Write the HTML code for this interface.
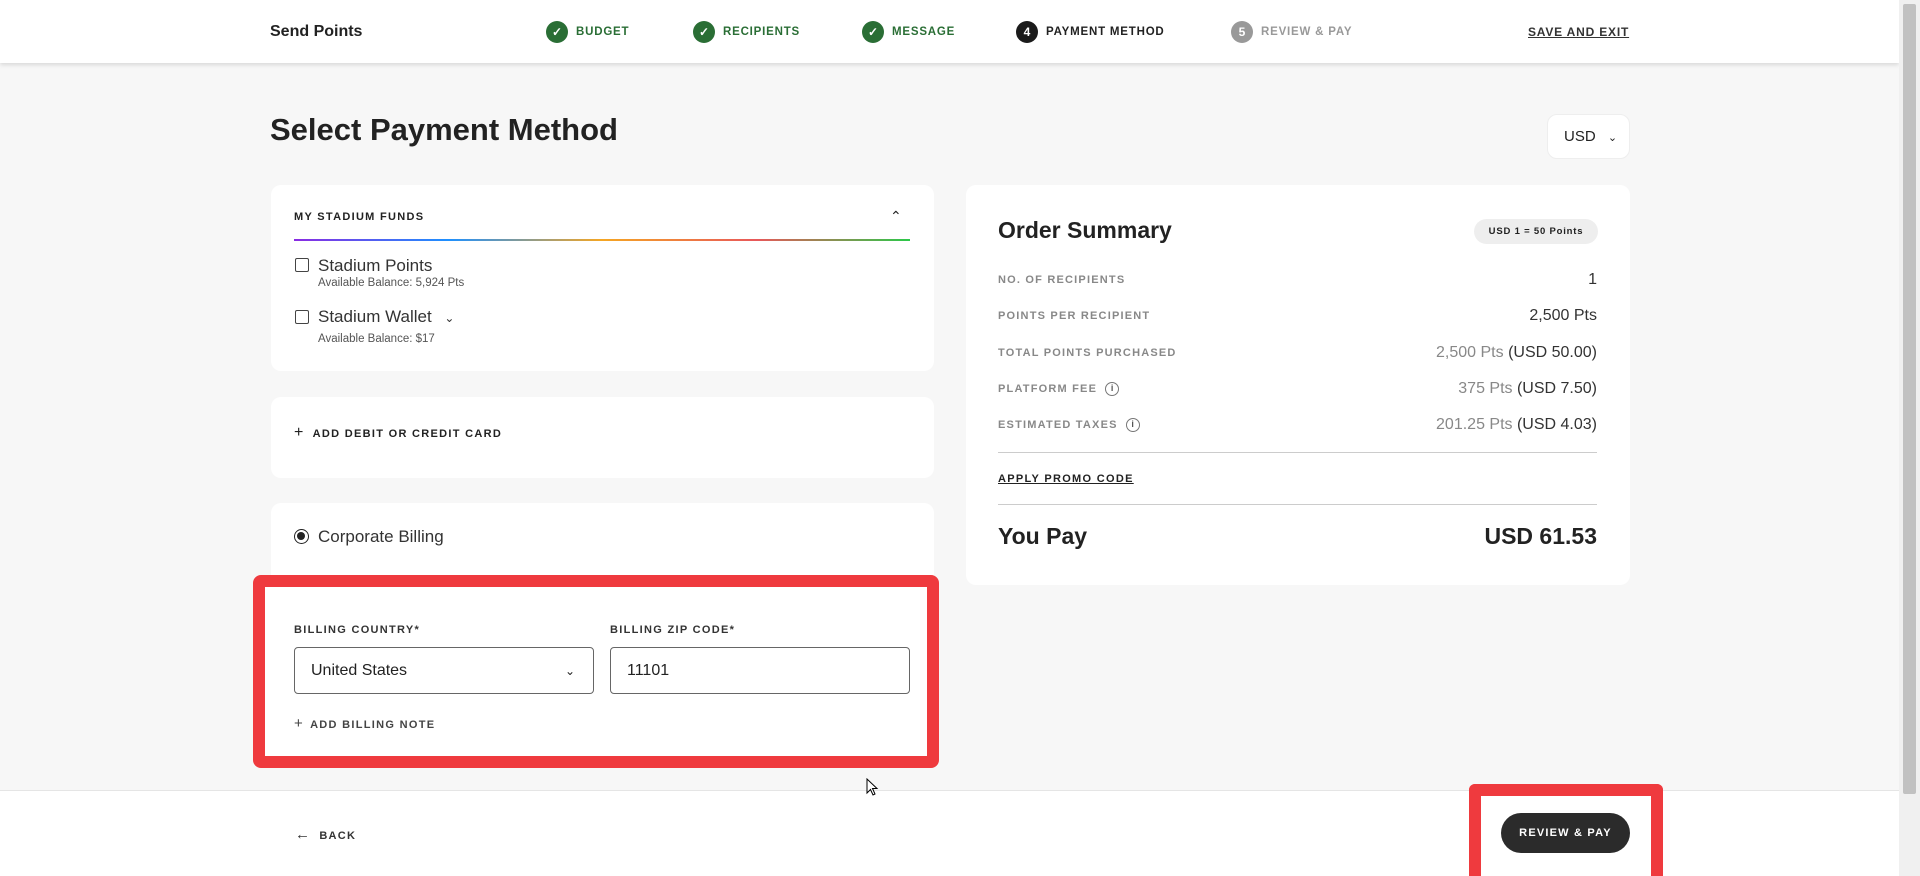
<!DOCTYPE html>
<html><head><style>
*{box-sizing:border-box;margin:0;padding:0}
body{width:1920px;height:876px;background:#f7f7f7;font-family:"Liberation Sans",sans-serif;color:#222;position:relative;overflow:hidden}
.abs{position:absolute}
.hdr{left:0;top:0;width:1899px;height:63px;background:#fff;box-shadow:0 2px 4px rgba(0,0,0,.12)}
.step{top:21px;height:22px;display:flex;align-items:center;font-size:11.5px;font-weight:bold;letter-spacing:.8px}
.circ{width:22px;height:22px;border-radius:50%;display:flex;align-items:center;justify-content:center;color:#fff;font-size:12px;margin-right:8px;letter-spacing:0}
.card{background:#fff;border-radius:10px}
.cap{font-size:11px;font-weight:bold;letter-spacing:1.3px}
.row{left:998px;width:599px;display:flex;justify-content:space-between;align-items:center;font-size:11px;font-weight:bold;letter-spacing:1.2px;color:#888}
.row b{font-size:16px;letter-spacing:0;color:#333;font-weight:normal}
.row b span{color:#888}
.info{display:inline-block;width:14px;height:14px;border:1.5px solid #777;border-radius:50%;font-size:9px;text-align:center;line-height:11px;color:#555;margin-left:8px;vertical-align:middle;letter-spacing:0}
.cb{width:14px;height:14px;border:1.5px solid #444;border-radius:2px}
.inp{height:47px;border:1px solid #666;border-radius:4px;background:#fff;font-size:16px;padding-left:16px;display:flex;align-items:center}
</style></head><body>
<div class="abs hdr"></div>
<div class="abs" style="left:270px;top:23px;font-size:16px;font-weight:bold">Send Points</div>
<div class="abs step" style="left:546px;color:#2a6e35"><div class="circ" style="background:#2a6e35">✓</div>BUDGET</div>
<div class="abs step" style="left:693px;color:#2a6e35"><div class="circ" style="background:#2a6e35">✓</div>RECIPIENTS</div>
<div class="abs step" style="left:862px;color:#2a6e35"><div class="circ" style="background:#2a6e35">✓</div>MESSAGE</div>
<div class="abs step" style="left:1016px;color:#222"><div class="circ" style="background:#1b1b1b">4</div>PAYMENT METHOD</div>
<div class="abs step" style="left:1231px;color:#999"><div class="circ" style="background:#999">5</div>REVIEW &amp; PAY</div>
<div class="abs" style="left:1528px;top:25px;font-size:12px;font-weight:bold;letter-spacing:.8px;text-decoration:underline;color:#333">SAVE AND EXIT</div>
<div class="abs" style="left:1899px;top:0;width:21px;height:876px;background:#f0f0f0"></div>
<div class="abs" style="left:1903px;top:4px;width:13px;height:790px;background:#c1c1c1;border-radius:2px"></div>

<div class="abs" style="left:270px;top:112px;font-size:31px;font-weight:bold;color:#222">Select Payment Method</div>
<div class="abs card" style="left:1547px;top:114px;width:83px;height:45px;border:1px solid #eee;font-size:15px;padding:13px 0 0 16px">USD <span style="font-size:11px;margin-left:8px">⌄</span></div>

<div class="abs card" style="left:271px;top:185px;width:663px;height:186px"></div>
<div class="abs cap" style="left:294px;top:211px">MY STADIUM FUNDS</div>
<div class="abs" style="left:890px;top:208px;font-size:14px">⌃</div>
<div class="abs" style="left:294px;top:239px;width:616px;height:2px;background:linear-gradient(90deg,#8a2be2,#1e90ff,#f5a623,#e8585a,#2cc84a)"></div>
<div class="abs cb" style="left:295px;top:258px"></div>
<div class="abs" style="left:318px;top:256px;font-size:17px;color:#333">Stadium Points</div>
<div class="abs" style="left:318px;top:277px;font-size:11.5px;color:#555">Available Balance: 5,924 Pts</div>
<div class="abs cb" style="left:295px;top:310px"></div>
<div class="abs" style="left:318px;top:307px;font-size:17px;color:#333">Stadium Wallet <span style="font-size:12px;margin-left:8px">⌄</span></div>
<div class="abs" style="left:318px;top:333px;font-size:11.5px;color:#555">Available Balance: $17</div>

<div class="abs card" style="left:271px;top:397px;width:663px;height:81px"></div>
<div class="abs cap" style="left:294px;top:424px;color:#222"><span style="font-size:16px;font-weight:normal;margin-right:8px">+</span>ADD DEBIT OR CREDIT CARD</div>

<div class="abs card" style="left:271px;top:503px;width:663px;height:90px"></div>
<div class="abs" style="left:294px;top:529px;width:15px;height:15px;border:1.5px solid #222;border-radius:50%"><div style="width:8px;height:8px;margin:2px;background:#222;border-radius:50%"></div></div>
<div class="abs" style="left:318px;top:527px;font-size:17px;color:#333">Corporate Billing</div>

<div class="abs" style="left:253px;top:575px;width:686px;height:193px;border:12px solid #ef3a3e;border-radius:8px;background:#fff"></div>
<div class="abs cap" style="left:294px;top:624px;color:#333">BILLING COUNTRY*</div>
<div class="abs cap" style="left:610px;top:624px;color:#333">BILLING ZIP CODE*</div>
<div class="abs inp" style="left:294px;top:647px;width:300px">United States<span style="position:absolute;right:18px;font-size:12px">⌄</span></div>
<div class="abs inp" style="left:610px;top:647px;width:300px">11101</div>
<div class="abs cap" style="left:294px;top:715px;color:#444"><span style="font-size:15px;font-weight:normal;margin-right:6px">+</span>ADD BILLING NOTE</div>

<div class="abs card" style="left:966px;top:185px;width:664px;height:400px"></div>
<div class="abs" style="left:998px;top:217px;font-size:23px;font-weight:bold">Order Summary</div>
<div class="abs" style="left:1474px;top:219px;width:124px;height:25px;border-radius:13px;background:#eee;font-size:9.5px;font-weight:bold;letter-spacing:.8px;text-align:center;line-height:25px">USD 1 = 50 Points</div>
<div class="abs row" style="top:271px">NO. OF RECIPIENTS<b>1</b></div>
<div class="abs row" style="top:307px">POINTS PER RECIPIENT<b>2,500 Pts</b></div>
<div class="abs row" style="top:344px">TOTAL POINTS PURCHASED<b><span>2,500 Pts</span> (USD 50.00)</b></div>
<div class="abs row" style="top:380px"><div>PLATFORM FEE<span class="info">i</span></div><b><span>375 Pts</span> (USD 7.50)</b></div>
<div class="abs row" style="top:416px"><div>ESTIMATED TAXES<span class="info">i</span></div><b><span>201.25 Pts</span> (USD 4.03)</b></div>
<div class="abs" style="left:998px;top:452px;width:599px;height:1px;background:#ccc"></div>
<div class="abs cap" style="left:998px;top:473px;text-decoration:underline;color:#222">APPLY PROMO CODE</div>
<div class="abs" style="left:998px;top:504px;width:599px;height:1px;background:#ccc"></div>
<div class="abs" style="left:998px;top:523px;font-size:23px;font-weight:bold">You Pay</div>
<div class="abs" style="left:1400px;width:197px;text-align:right;top:523px;font-size:23px;font-weight:bold">USD 61.53</div>

<div class="abs" style="left:0;top:790px;width:1899px;height:86px;background:#fff;border-top:1px solid #e5e5e5"></div>
<div class="abs cap" style="left:295px;top:826px;color:#333"><span style="font-size:15px;font-weight:normal;margin-right:8px">←</span>BACK</div>
<div class="abs" style="left:1469px;top:784px;width:194px;height:92px;border:12px solid #ef3a3e;border-bottom:none;border-radius:6px 6px 0 0"></div>
<div class="abs" style="left:1501px;top:813px;width:129px;height:40px;background:#2b2b2b;border-radius:20px;color:#fff;font-size:11px;font-weight:bold;letter-spacing:1.2px;text-align:center;line-height:40px">REVIEW &amp; PAY</div>
<svg class="abs" style="left:866px;top:778px" width="14" height="20" viewBox="0 0 14 20"><path d="M1 1 L1 15 L4.5 11.5 L7 17 L9 16 L6.5 10.5 L11 10.5 Z" fill="#fff" stroke="#000" stroke-width="1"/></svg>
</body></html>
